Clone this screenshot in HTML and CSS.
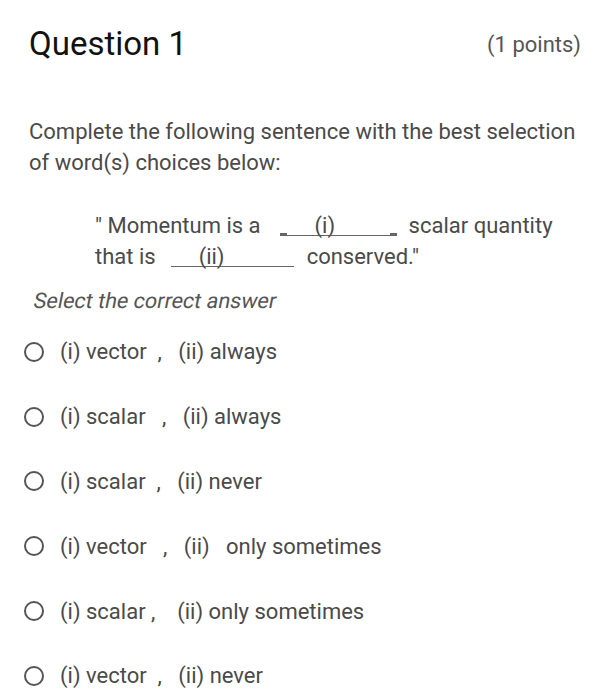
FILE: index.html
```html
<!DOCTYPE html>
<html>
<head>
<meta charset="utf-8">
<link rel="stylesheet" href="styles.css">
</head>
<body>
<div class="page">
  <div class="header">
    <h1 class="title">Question 1</h1>
    <span class="points">(1 points)</span>
  </div>
  <p class="prompt">Complete the following sentence with the best selection of word(s) choices below:</p>
  <div class="quote">
    <div class="qline">" Momentum is a<span class="blank blank-i"><span class="dash"></span><span class="mark">(i)</span><span class="dash"></span></span>scalar quantity</div>
    <div class="qline">that is<span class="blank blank-ii"><span class="mark">(ii)</span></span>conserved."</div>
  </div>
  <p class="instr"><span class="oblique">Select the correct answer</span></p>
  <ul class="options">
    <li class="option"><span class="radio"></span><span class="label">(i) vector  ,   (ii) always</span></li>
    <li class="option"><span class="radio"></span><span class="label">(i) scalar   ,   (ii) always</span></li>
    <li class="option"><span class="radio"></span><span class="label">(i) scalar  ,   (ii) never</span></li>
    <li class="option"><span class="radio"></span><span class="label">(i) vector   ,   (ii)   only sometimes</span></li>
    <li class="option"><span class="radio"></span><span class="label">(i) scalar ,    (ii) only sometimes</span></li>
    <li class="option"><span class="radio"></span><span class="label">(i) vector  ,   (ii) never</span></li>
  </ul>
</div>
</body>
</html>
```
FILE: styles.css
```css
html, body {
  margin: 0;
  padding: 0;
  background: #fff;
}
body {
  font-family: Roboto, "Noto Sans", "Liberation Sans", sans-serif;
  color: #444;
}
.page {
  width: 602px;
  height: 700px;
  overflow: hidden;
}
.header {
  display: flex;
  justify-content: space-between;
  align-items: center;
  padding: 26px 21px 0 29px;
  height: 36px;
}
.title {
  margin: 0;
  font-size: 33px;
  line-height: 36px;
  font-weight: 400;
  color: #111;
}
.points {
  font-size: 22px;
  color: #555;
}
.prompt {
  margin: 53.5px 0 0;
  padding: 0 10px 0 29px;
  font-size: 22px;
  line-height: 31px;
  color: #4a4a4a;
}
.quote {
  margin-top: 32px;
  padding-left: 95px;
  font-size: 22px;
  line-height: 31px;
  color: #4a4a4a;
}
.blank {
  display: inline-block;
  position: relative;
  line-height: 19px;
  border-bottom: 1px solid #666;
  box-sizing: border-box;
  text-align: left;
}
.blank-i {
  width: 117px;
  margin: 0 12px 0 19px;
  padding-left: 35px;
}
.blank-ii {
  width: 123px;
  margin: 0 13px 0 15px;
  padding-left: 28px;
}
.dash {
  position: absolute;
  bottom: -1px;
  width: 7px;
  height: 3px;
  background: #666;
}
.dash:first-child {
  left: 0;
}
.dash:last-child {
  right: 0;
}
.instr {
  margin: 14.5px 0 0;
  padding-left: 31px;
  font-size: 21.5px;
  line-height: 30px;
  color: #555;
}
.oblique {
  display: inline-block;
  transform: skewX(-11deg);
  transform-origin: 0 100%;
}
.options {
  list-style: none;
  margin: 3.5px 0 0;
  padding: 0 0 0 24px;
}
.option {
  display: flex;
  align-items: center;
  height: 64.8px;
}
.radio {
  width: 20px;
  height: 20px;
  box-sizing: border-box;
  border: 2.8px solid #555;
  border-radius: 50%;
  flex: none;
}
.label {
  margin-left: 16px;
  font-size: 22px;
  white-space: pre;
  color: #4a4a4a;
}
```
